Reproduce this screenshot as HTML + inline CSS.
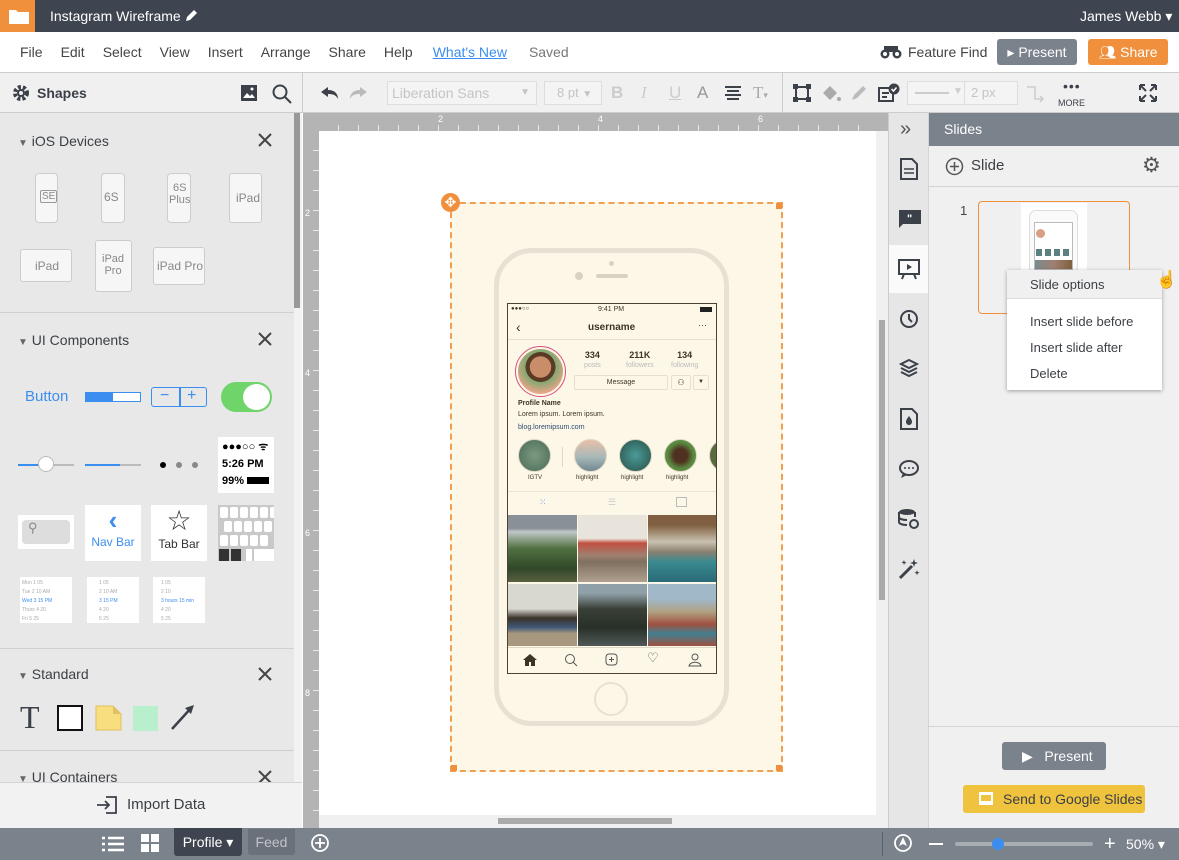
<!DOCTYPE html>
<html><head><meta charset="utf-8"><style>
*{box-sizing:border-box;margin:0;padding:0}
body{width:1179px;height:860px;overflow:hidden;position:relative;font-family:"Liberation Sans",sans-serif;background:#fff;color:#3b3f45}
.a{position:absolute}
.ic{fill:none;stroke:#3b4049;stroke-width:2}
.x{position:absolute;width:14px;height:14px}
</style></head><body>
<!-- top bar -->
<div class="a" style="left:0;top:0;width:1179px;height:32px;background:#3f4550"></div>
<div class="a" style="left:0;top:0;width:35px;height:32px;background:#f0903c"></div>
<svg class="a" style="left:9px;top:8px" width="20" height="16"><path d="M0 2h7l2 2h11v12H0z" fill="#fff"/></svg>
<div class="a" style="left:50px;top:8px;color:#fff;font-size:14px">Instagram Wireframe</div>
<svg class="a" style="left:184px;top:9px" width="14" height="14"><path d="M2 12l1-4 7-7 3 3-7 7z" fill="#fff"/></svg>
<div class="a" style="left:1080px;top:8px;color:#fff;font-size:14px">James Webb ▾</div>
<!-- menu -->
<div class="a" style="left:0;top:32px;width:1179px;height:41px;border-bottom:1px solid #ccc;background:#fff"></div>
<div class="a" style="left:20px;top:44px;font-size:14px;color:#444">
<span style="margin-right:18px">File</span><span style="margin-right:18px">Edit</span><span style="margin-right:18px">Select</span><span style="margin-right:18px">View</span><span style="margin-right:18px">Insert</span><span style="margin-right:18px">Arrange</span><span style="margin-right:18px">Share</span><span style="margin-right:20px">Help</span><span style="margin-right:22px;color:#3b8ef0;text-decoration:underline">What's New</span><span style="color:#777">Saved</span></div>
<svg class="a" style="left:880px;top:44px" width="22" height="16"><circle cx="5" cy="10" r="4.5" fill="#3b4049"/><circle cx="17" cy="10" r="4.5" fill="#3b4049"/><rect x="4" y="2" width="14" height="6" fill="#3b4049"/><circle cx="5" cy="10" r="2" fill="#fff"/><circle cx="17" cy="10" r="2" fill="#fff"/></svg>
<div class="a" style="left:908px;top:44px;font-size:14px;color:#444">Feature Find</div>
<div class="a" style="left:997px;top:39px;width:80px;height:26px;background:#7a828c;border-radius:3px;color:#fff;font-size:14px;line-height:26px;text-align:center">▸ Present</div>
<div class="a" style="left:1088px;top:39px;width:80px;height:26px;background:#f0903c;border-radius:3px;color:#fff;font-size:14px;line-height:26px;text-align:center">👥︎ Share</div>
<!-- toolbar -->
<div class="a" style="left:0;top:73px;width:1179px;height:40px;background:#f0f0f0;border-bottom:1px solid #ccc"></div>
<div class="a" style="left:302px;top:73px;width:1px;height:40px;background:#ccc"></div>
<svg class="a" style="left:12px;top:84px" width="18" height="18"><circle cx="9" cy="9" r="6" fill="none" stroke="#3b4049" stroke-width="4" stroke-dasharray="3 2"/><circle cx="9" cy="9" r="4" fill="#3b4049"/><circle cx="9" cy="9" r="2" fill="#f0f0f0"/></svg>
<div class="a" style="left:37px;top:85px;font-size:14px;font-weight:bold;color:#3b4049">Shapes</div>
<svg class="a" style="left:240px;top:84px" width="18" height="18"><rect x="1" y="1" width="16" height="16" fill="#3b4049"/><path d="M3 14l4-5 3 3 2-2 3 4z" fill="#fff"/><circle cx="12" cy="5" r="1.5" fill="#fff"/></svg>
<svg class="a" style="left:271px;top:83px" width="22" height="22"><circle cx="9" cy="9" r="6.5" class="ic"/><path d="M14 14l6 6" class="ic" stroke-width="2.5"/></svg>
<svg class="a" style="left:320px;top:86px" width="60" height="14"><path d="M8 1L1 6l7 5V8c5 0 8 1 10 5 0-5-3-9-10-9z" fill="#3b4049"/><path d="M40 1l7 5-7 5V8c-5 0-8 1-10 5 0-5 3-9 10-9z" fill="#bbb"/></svg>
<div class="a" style="left:387px;top:81px;width:150px;height:24px;border:1px solid #ddd;background:#f4f4f4;color:#c4c4c4;font-size:14px;line-height:22px;padding-left:4px">Liberation Sans<span style="float:right;margin-right:6px;font-size:10px">▼</span></div>
<div class="a" style="left:544px;top:81px;width:58px;height:24px;border:1px solid #ddd;background:#f4f4f4;color:#c4c4c4;font-size:13px;line-height:22px;padding-left:12px">8 pt <span style="font-size:10px">▼</span></div>
<div class="a" style="left:611px;top:83px;font-size:17px;color:#ccc;font-weight:bold">B</div>
<div class="a" style="left:641px;top:83px;font-size:17px;color:#ccc;font-style:italic;font-family:'Liberation Serif'">I</div>
<div class="a" style="left:669px;top:83px;font-size:17px;color:#ccc;text-decoration:underline">U</div>
<div class="a" style="left:697px;top:83px;font-size:17px;color:#999">A</div>
<svg class="a" style="left:725px;top:86px" width="16" height="14"><path d="M0 1h16M2 5h12M0 9h16M2 13h12" stroke="#3b4049" stroke-width="2"/></svg>
<div class="a" style="left:753px;top:83px;font-size:17px;color:#aaa;font-family:'Liberation Serif'">T<span style="font-size:9px">▾</span></div>
<div class="a" style="left:782px;top:73px;width:1px;height:40px;background:#ccc"></div>
<svg class="a" style="left:793px;top:84px" width="18" height="18"><rect x="3" y="3" width="12" height="12" fill="none" stroke="#3b4049" stroke-width="2"/><rect x="0" y="0" width="5" height="5" fill="#3b4049"/><rect x="13" y="0" width="5" height="5" fill="#3b4049"/><rect x="0" y="13" width="5" height="5" fill="#3b4049"/><rect x="13" y="13" width="5" height="5" fill="#3b4049"/></svg>
<svg class="a" style="left:821px;top:84px" width="20" height="18"><path d="M2 9l7-7 7 7-7 7z" fill="#aaa"/><circle cx="18" cy="15" r="2" fill="#aaa"/></svg>
<svg class="a" style="left:850px;top:84px" width="18" height="18"><path d="M2 16l2-5 9-9 3 3-9 9z" fill="#bbb"/></svg>
<svg class="a" style="left:878px;top:83px" width="22" height="20"><rect x="1" y="5" width="14" height="13" fill="none" stroke="#3b4049" stroke-width="2"/><path d="M4 10h7M4 14h5" stroke="#3b4049" stroke-width="2"/><circle cx="16" cy="6" r="5.5" fill="#3b4049"/><path d="M13.5 6l2 2 3-3.5" stroke="#fff" stroke-width="1.5" fill="none"/></svg>
<div class="a" style="left:907px;top:81px;width:58px;height:24px;border:1px solid #ddd;background:#f4f4f4"></div>
<div class="a" style="left:915px;top:92px;width:34px;height:1.5px;background:#ccc"></div>
<div class="a" style="left:953px;top:86px;font-size:10px;color:#ccc">▼</div>
<div class="a" style="left:964px;top:81px;width:54px;height:24px;border:1px solid #ddd;background:#f4f4f4;color:#c4c4c4;font-size:13px;line-height:22px;padding-left:6px">2 px</div>
<svg class="a" style="left:1025px;top:84px" width="22" height="20"><path d="M2 3h8v12h8M15 12l3 3-3 3" fill="none" stroke="#ccc" stroke-width="1.5"/></svg>
<div class="a" style="left:1063px;top:78px;font-size:14px;color:#3b4049;letter-spacing:1px">•••</div>
<div class="a" style="left:1058px;top:98px;font-size:9px;color:#3b4049">MORE</div>
<svg class="a" style="left:1139px;top:84px" width="18" height="18"><path d="M1 1l6 6M1 1h5M1 1v5M17 1l-6 6M17 1h-5M17 1v5M1 17l6-6M1 17h5M1 17v-5M17 17l-6-6M17 17h-5M17 17v-5" stroke="#3b4049" stroke-width="2"/></svg>
<!-- left panel -->
<div class="a" style="left:0;top:113px;width:302px;height:715px;background:#e8e8e8"></div>
<div class="a" style="left:294px;top:113px;width:8px;height:715px;background:#f2f2f2"></div>
<div class="a" style="left:294px;top:113px;width:6px;height:195px;background:#999"></div>
<div class="a" style="left:18px;top:133px;font-size:14px;color:#3b3f45"><span style="font-size:10px;color:#666">▼</span> iOS Devices</div>
<svg class="x" style="left:258px;top:133px"><path d="M1 1l12 12M13 1L1 13" stroke="#444" stroke-width="2"/></svg>
<!-- devices -->
<div class="a" style="left:35px;top:173px;width:23px;height:50px;border:1px solid #ccc;border-radius:4px;background:#f6f6f6"></div><div class="a" style="left:40px;top:190px;font-size:10px;color:#888;border:1px solid #999;border-radius:2px;padding:0 1px">SE</div>
<div class="a" style="left:101px;top:173px;width:24px;height:50px;border:1px solid #ccc;border-radius:4px;background:#f6f6f6"></div><div class="a" style="left:104px;top:190px;font-size:12px;color:#888">6S</div>
<div class="a" style="left:167px;top:173px;width:24px;height:50px;border:1px solid #ccc;border-radius:4px;background:#f6f6f6"></div><div class="a" style="left:169px;top:182px;font-size:11px;color:#888;line-height:12px;text-align:center">6S<br>Plus</div>
<div class="a" style="left:229px;top:173px;width:33px;height:50px;border:1px solid #ccc;border-radius:3px;background:#f6f6f6"></div><div class="a" style="left:236px;top:191px;font-size:12px;color:#888">iPad</div>
<div class="a" style="left:20px;top:249px;width:52px;height:33px;border:1px solid #ccc;border-radius:3px;background:#f6f6f6"></div><div class="a" style="left:35px;top:259px;font-size:12px;color:#888">iPad</div>
<div class="a" style="left:95px;top:240px;width:37px;height:52px;border:1px solid #ccc;border-radius:3px;background:#f6f6f6"></div><div class="a" style="left:102px;top:253px;font-size:11px;color:#888;line-height:12px;text-align:center">iPad<br>Pro</div>
<div class="a" style="left:153px;top:247px;width:52px;height:38px;border:1px solid #ccc;border-radius:3px;background:#f6f6f6"></div><div class="a" style="left:157px;top:259px;font-size:12px;color:#888">iPad Pro</div>
<div class="a" style="left:0;top:312px;width:294px;height:1px;background:#d0d0d0"></div>
<div class="a" style="left:18px;top:332px;font-size:14px;color:#3b3f45"><span style="font-size:10px;color:#666">▼</span> UI Components</div>
<svg class="x" style="left:258px;top:332px"><path d="M1 1l12 12M13 1L1 13" stroke="#444" stroke-width="2"/></svg>
<div class="a" style="left:25px;top:388px;font-size:15px;color:#3b8ef0">Button</div>
<div class="a" style="left:85px;top:392px;width:56px;height:10px;border:1px solid #3b8ef0;background:#fff"><div style="width:27px;height:8px;background:#3b8ef0"></div></div>
<div class="a" style="left:151px;top:387px;width:56px;height:20px;border:1.5px solid #3b8ef0;border-radius:3px;color:#3b8ef0;font-size:16px;line-height:16px"><span class="a" style="left:8px;top:0">−</span><span class="a" style="left:27px;top:0;width:1.5px;height:18px;background:#3b8ef0"></span><span class="a" style="left:35px;top:0">+</span></div>
<div class="a" style="left:221px;top:382px;width:51px;height:30px;border-radius:15px;background:#6fd46a"></div><div class="a" style="left:243px;top:384px;width:27px;height:26px;border-radius:50%;background:#fff"></div>
<div class="a" style="left:18px;top:464px;width:56px;height:1.5px;background:#bbb"></div><div class="a" style="left:18px;top:464px;width:28px;height:1.5px;background:#3b8ef0"></div><div class="a" style="left:38px;top:456px;width:16px;height:16px;border-radius:50%;background:#fff;border:1px solid #bbb"></div>
<div class="a" style="left:85px;top:464px;width:56px;height:1.5px;background:#bbb"></div><div class="a" style="left:85px;top:464px;width:35px;height:1.5px;background:#3b8ef0"></div>
<div class="a" style="left:160px;top:462px;width:6px;height:6px;border-radius:50%;background:#000"></div><div class="a" style="left:176px;top:462px;width:6px;height:6px;border-radius:50%;background:#888"></div><div class="a" style="left:192px;top:462px;width:6px;height:6px;border-radius:50%;background:#888"></div>
<div class="a" style="left:218px;top:437px;width:56px;height:56px;background:#fff;font-size:11px;color:#000;font-weight:bold;padding:2px 4px;line-height:17px">●●●○○ ᯤ<br>5:26 PM<br>99% <span style="display:inline-block;width:22px;height:7px;background:#000"></span></div>
<div class="a" style="left:18px;top:515px;width:56px;height:34px;background:#fff"><div style="margin:5px 4px;height:24px;background:#ddd;border-radius:4px;color:#888;font-size:13px;padding-left:6px">⚲</div></div>
<div class="a" style="left:85px;top:505px;width:56px;height:56px;background:#fff;color:#3b8ef0;text-align:center;font-size:12px"><div style="font-size:26px;line-height:30px;font-weight:bold">‹</div>Nav Bar</div>
<div class="a" style="left:151px;top:505px;width:56px;height:56px;background:#fff;color:#333;text-align:center;font-size:12px"><div style="font-size:28px;line-height:32px">☆</div>Tab Bar</div>
<svg class="a" style="left:218px;top:505px" width="56" height="56"><rect width="56" height="56" fill="#c9c9c9"/><g fill="#fff"><rect x="2" y="2" width="8" height="11" rx="2"/><rect x="12" y="2" width="8" height="11" rx="2"/><rect x="22" y="2" width="8" height="11" rx="2"/><rect x="32" y="2" width="8" height="11" rx="2"/><rect x="42" y="2" width="8" height="11" rx="2"/><rect x="52" y="2" width="8" height="11" rx="2"/><rect x="6" y="16" width="8" height="11" rx="2"/><rect x="16" y="16" width="8" height="11" rx="2"/><rect x="26" y="16" width="8" height="11" rx="2"/><rect x="36" y="16" width="8" height="11" rx="2"/><rect x="46" y="16" width="8" height="11" rx="2"/><rect x="2" y="30" width="8" height="11" rx="2"/><rect x="12" y="30" width="8" height="11" rx="2"/><rect x="22" y="30" width="8" height="11" rx="2"/><rect x="32" y="30" width="8" height="11" rx="2"/><rect x="42" y="30" width="8" height="11" rx="2"/><rect x="28" y="44" width="6" height="12"/><rect x="36" y="44" width="20" height="12"/></g><rect x="1" y="44" width="10" height="12" fill="#333"/><rect x="13" y="44" width="10" height="12" fill="#333"/></svg>
<div class="a" style="left:20px;top:577px;width:52px;height:46px;background:#fff;font-size:5px;color:#aaa;line-height:9px;padding:2px">Mon 1 05<br>Tue 2 10 AM<br><span style="color:#3b8ef0">Wed 3 15 PM</span><br>Thurs 4 20<br>Fri 5 25</div>
<div class="a" style="left:87px;top:577px;width:52px;height:46px;background:#fff;font-size:5px;color:#aaa;line-height:9px;padding:2px 12px">1 05<br>2 10 AM<br><span style="color:#3b8ef0">3 15 PM</span><br>4 20<br>5 25</div>
<div class="a" style="left:153px;top:577px;width:52px;height:46px;background:#fff;font-size:5px;color:#aaa;line-height:9px;padding:2px 8px">1 05<br>2 10<br><span style="color:#3b8ef0">3 hours 15 min</span><br>4 20<br>5 25</div>
<div class="a" style="left:0;top:648px;width:294px;height:1px;background:#d0d0d0"></div>
<div class="a" style="left:18px;top:666px;font-size:14px;color:#3b3f45"><span style="font-size:10px;color:#666">▼</span> Standard</div>
<svg class="x" style="left:258px;top:667px"><path d="M1 1l12 12M13 1L1 13" stroke="#444" stroke-width="2"/></svg>
<div class="a" style="left:20px;top:700px;font-size:32px;font-family:'Liberation Serif';color:#3b4049;line-height:34px">T</div>
<div class="a" style="left:57px;top:705px;width:26px;height:26px;border:2px solid #111;background:#fff"></div>
<svg class="a" style="left:95px;top:705px" width="28" height="26"><path d="M1 1h17l8 8v16H1z" fill="#f8de7e" stroke="#e0c060"/><path d="M18 1v8h8" fill="#e0c060"/></svg>
<div class="a" style="left:133px;top:706px;width:25px;height:25px;background:#b8efcc"></div>
<svg class="a" style="left:170px;top:703px" width="26" height="28"><path d="M2 26L22 4" stroke="#3b4049" stroke-width="2.5"/><path d="M24 2l-9 3 6 6z" fill="#3b4049"/></svg>
<div class="a" style="left:0;top:750px;width:294px;height:1px;background:#d0d0d0"></div>
<div class="a" style="left:18px;top:769px;font-size:14px;color:#3b3f45"><span style="font-size:10px;color:#666">▼</span> UI Containers</div>
<svg class="x" style="left:258px;top:770px"><path d="M1 1l12 12M13 1L1 13" stroke="#444" stroke-width="2"/></svg>
<div class="a" style="left:0;top:782px;width:302px;height:46px;background:#f2f2f2;border-top:1px solid #d4d4d4"></div>
<svg class="a" style="left:96px;top:795px" width="22" height="20"><path d="M1 10h12M9 6l4 4-4 4M10 2h10v16H10" fill="none" stroke="#3b4049" stroke-width="1.8"/></svg>
<div class="a" style="left:127px;top:796px;font-size:15px;color:#3b3f45">Import Data</div>
<!-- canvas -->
<div class="a" style="left:303px;top:113px;width:585px;height:715px;background:#b4b4b4"></div>
<div class="a" style="left:319px;top:131px;width:557px;height:684px;background:#fff"></div>
<div class="a" style="left:876px;top:131px;width:12px;height:697px;background:#f0f0f0"></div>
<div class="a" style="left:879px;top:320px;width:6px;height:280px;background:#aaa"></div>
<div class="a" style="left:319px;top:815px;width:557px;height:13px;background:#f0f0f0"></div>
<div class="a" style="left:498px;top:818px;width:174px;height:6px;background:#aaa"></div>
<div class="a" style="left:319px;top:125px;width:557px;height:6px;background:repeating-linear-gradient(90deg,transparent 0 19px,#e8e8e8 19px 20px)"></div>
<div class="a" style="left:313px;top:131px;width:6px;height:684px;background:repeating-linear-gradient(180deg,transparent 0 19px,#e8e8e8 19px 20px)"></div>
<div class="a" style="left:438px;top:114px;font-size:9px;color:#fff">2</div>
<div class="a" style="left:598px;top:114px;font-size:9px;color:#fff">4</div>
<div class="a" style="left:758px;top:114px;font-size:9px;color:#fff">6</div>
<div class="a" style="left:305px;top:208px;font-size:9px;color:#fff">2</div>
<div class="a" style="left:305px;top:368px;font-size:9px;color:#fff">4</div>
<div class="a" style="left:305px;top:528px;font-size:9px;color:#fff">6</div>
<div class="a" style="left:305px;top:688px;font-size:9px;color:#fff">8</div>
<!-- page/frame -->
<div class="a" style="left:450px;top:202px;width:333px;height:570px;background:#fdf7e8;border:2px dashed #f0a050"></div>
<div class="a" style="left:441px;top:193px;width:19px;height:19px;border-radius:50%;background:#f0903c;color:#fff;font-size:14px;line-height:19px;text-align:center">✥</div>
<div class="a" style="left:776px;top:203px;width:6px;height:6px;background:#f0903c"></div>
<div class="a" style="left:451px;top:765px;width:6px;height:6px;background:#f0903c"></div>
<div class="a" style="left:776px;top:765px;width:6px;height:6px;background:#f0903c"></div>
<div class="a" style="left:494px;top:248px;width:235px;height:478px;border:5px solid #e6e1d3;border-radius:38px"></div>
<div class="a" style="left:609px;top:261px;width:5px;height:5px;border-radius:50%;background:#d8d2c3"></div>
<div class="a" style="left:575px;top:272px;width:8px;height:8px;border-radius:50%;background:#d8d2c3"></div>
<div class="a" style="left:596px;top:274px;width:32px;height:4px;border-radius:2px;background:#d8d2c3"></div>
<div class="a" style="left:594px;top:682px;width:34px;height:34px;border-radius:50%;border:2px solid #e6e1d3"></div>
<!-- screen -->
<div class="a" style="left:507px;top:303px;width:210px;height:371px;border:1.5px solid #4a4235;background:#fdf7e8;overflow:hidden;font-size:8px;color:#3b3528">
 <div class="a" style="left:3px;top:2px;font-size:6px">●●●○○</div>
 <div class="a" style="left:90px;top:2px;font-size:7px">9:41 PM</div>
 <div class="a" style="left:192px;top:3px;width:12px;height:5px;background:#222"></div>
 <div class="a" style="left:8px;top:15px;font-size:14px">‹</div>
 <div class="a" style="left:80px;top:18px;font-size:10px;font-weight:bold">username</div>
 <div class="a" style="left:190px;top:16px;font-size:9px">···</div>
 <div class="a" style="left:0;top:35px;width:210px;height:1px;background:#e6dfcc"></div>
 <div class="a" style="left:7px;top:42px;width:51px;height:51px;border-radius:50%;border:1.5px solid #d8507a;padding:2px"><div style="width:100%;height:100%;border-radius:50%;background:radial-gradient(circle at 50% 40%,#c98d6a 0 30%,#5a3a25 31% 42%,#80a870 43%,#e9a58a 75%)"></div></div>
 <div class="a" style="left:76px;top:47px;font-size:9px;font-weight:bold;text-align:center;line-height:9px">334<br><span style="font-size:7px;color:#bbb;font-weight:normal">posts</span></div>
 <div class="a" style="left:118px;top:47px;font-size:9px;font-weight:bold;text-align:center;line-height:9px">211K<br><span style="font-size:7px;color:#bbb;font-weight:normal">followers</span></div>
 <div class="a" style="left:163px;top:47px;font-size:9px;font-weight:bold;text-align:center;line-height:9px">134<br><span style="font-size:7px;color:#bbb;font-weight:normal">following</span></div>
 <div class="a" style="left:66px;top:71px;width:94px;height:15px;border:1px solid #e6dfcc;border-radius:2px;font-size:7px;text-align:center;line-height:13px">Message</div>
 <div class="a" style="left:163px;top:71px;width:20px;height:15px;border:1px solid #e6dfcc;border-radius:2px;font-size:8px;text-align:center;line-height:13px">⚇</div>
 <div class="a" style="left:185px;top:71px;width:16px;height:15px;border:1px solid #e6dfcc;border-radius:2px;font-size:6px;text-align:center;line-height:13px">▼</div>
 <div class="a" style="left:10px;top:96px;font-size:7px;font-weight:bold">Profile Name</div>
 <div class="a" style="left:10px;top:107px;font-size:7px">Lorem ipsum. Lorem ipsum.</div>
 <div class="a" style="left:10px;top:120px;font-size:7px;color:#2d4b70">blog.loremipsum.com</div>
 <div class="a" style="left:10px;top:135px;width:33px;height:33px;border-radius:50%;border:1px solid #e0d8c4;background:radial-gradient(#7a9a80,#4a6a58)"></div>
 <div class="a" style="left:20px;top:171px;font-size:6px">IGTV</div>
 <div class="a" style="left:54px;top:143px;width:1px;height:20px;background:#e0d8c4"></div>
 <div class="a" style="left:66px;top:135px;width:33px;height:33px;border-radius:50%;border:1px solid #e0d8c4;background:linear-gradient(#e8c0a8,#a8b8b8 55%,#708890)"></div>
 <div class="a" style="left:68px;top:171px;font-size:6px">highlight</div>
 <div class="a" style="left:111px;top:135px;width:33px;height:33px;border-radius:50%;border:1px solid #e0d8c4;background:radial-gradient(#4a9a98,#2a5048)"></div>
 <div class="a" style="left:113px;top:171px;font-size:6px">highlight</div>
 <div class="a" style="left:156px;top:135px;width:33px;height:33px;border-radius:50%;border:1px solid #e0d8c4;background:radial-gradient(#503020 0 30%,#5a8a40 60%)"></div>
 <div class="a" style="left:158px;top:171px;font-size:6px">highlight</div>
 <div class="a" style="left:201px;top:135px;width:33px;height:33px;border-radius:50%;border:1px solid #e0d8c4;background:#5a6a40"></div>
 <div class="a" style="left:0;top:187px;width:210px;height:1px;background:#ece5d2"></div>
 <div class="a" style="left:31px;top:193px;font-size:9px;color:#6aa0e0">⁙</div>
 <div class="a" style="left:100px;top:193px;font-size:9px;color:#ccc">☰</div>
 <div class="a" style="left:168px;top:193px;width:11px;height:10px;border:1px solid #bbb"></div>
 <div class="a" style="left:0;top:211px;width:69px;height:67px;background:linear-gradient(#8a9098 0 20%,#c0c8c8 25%,#507040 50%,#304828 80%,#5a6040)"></div>
 <div class="a" style="left:70px;top:211px;width:69px;height:67px;background:linear-gradient(#e8e4dc 0 35%,#c05040 42%,#a08070 60%,#807060 70%,#b0a090)"></div>
 <div class="a" style="left:140px;top:211px;width:70px;height:67px;background:linear-gradient(#806040 0 15%,#c8c0b0 40%,#8a8070 55%,#3a8a90 70%,#2a6a78)"></div>
 <div class="a" style="left:0;top:280px;width:69px;height:62px;background:linear-gradient(#d8d8d0 0 40%,#3a3228 55%,#405878 70%,#a89880 80%)"></div>
 <div class="a" style="left:70px;top:280px;width:69px;height:62px;background:linear-gradient(#90a0a8 0 15%,#3a4038 40%,#283028 70%,#505858)"></div>
 <div class="a" style="left:140px;top:280px;width:70px;height:62px;background:linear-gradient(#a0b8c8 0 25%,#b0a080 45%,#a05040 65%,#408090 80%,#a05040)"></div>
 <div class="a" style="left:0;top:343px;width:210px;height:1px;background:#e0d8c4"></div>
 <svg class="a" style="left:15px;top:350px" width="14" height="12"><path d="M7 0L0 6h2v6h4V8h2v4h4V6h2z" fill="#3b3528"/></svg>
 <svg class="a" style="left:56px;top:349px" width="14" height="14"><circle cx="6" cy="6" r="4.5" fill="none" stroke="#555" stroke-width="1"/><path d="M9 9l4 4" stroke="#555"/></svg>
 <svg class="a" style="left:97px;top:349px" width="14" height="14"><rect x="1" y="1" width="11" height="11" rx="3" fill="none" stroke="#555"/><path d="M6.5 4v5M4 6.5h5" stroke="#555"/></svg>
 <div class="a" style="left:139px;top:346px;font-size:13px;color:#555">♡</div>
 <svg class="a" style="left:180px;top:349px" width="14" height="14"><circle cx="7" cy="4" r="3" fill="none" stroke="#555"/><path d="M1 13c1-5 11-5 12 0z" fill="none" stroke="#555"/></svg>
</div>
<!-- right strip -->
<div class="a" style="left:888px;top:113px;width:41px;height:715px;background:#e6e6e6;border-left:1px solid #ccc;border-right:1px solid #d4d4d4"></div>
<div class="a" style="left:889px;top:245px;width:39px;height:48px;background:#fafafa"></div>
<div class="a" style="left:900px;top:118px;font-size:20px;color:#555">»</div>
<svg class="a" style="left:900px;top:158px" width="18" height="22"><path d="M1 1h11l5 5v15H1z" fill="none" stroke="#3b4049" stroke-width="2"/><path d="M4 11h10M4 15h10" stroke="#3b4049" stroke-width="1.5"/></svg>
<svg class="a" style="left:899px;top:210px" width="22" height="18"><path d="M0 0h22v14H4L0 18z" fill="#3b4049"/><text x="8" y="12" font-size="11" fill="#fff" font-family="Liberation Sans" font-weight="bold">"</text></svg>
<svg class="a" style="left:898px;top:258px" width="22" height="22"><rect x="1" y="2" width="20" height="14" fill="none" stroke="#3b4049" stroke-width="2"/><path d="M9 6v6l5-3z" fill="#3b4049"/><path d="M6 16l-2 5M16 16l2 5M0 2h22" stroke="#3b4049" stroke-width="2"/></svg>
<svg class="a" style="left:899px;top:309px" width="20" height="20"><circle cx="10" cy="10" r="8" fill="none" stroke="#3b4049" stroke-width="2"/><path d="M10 5v5l3 3" fill="none" stroke="#3b4049" stroke-width="2"/></svg>
<svg class="a" style="left:899px;top:358px" width="20" height="20"><path d="M10 2l8 4-8 4-8-4z" fill="none" stroke="#3b4049" stroke-width="2"/><path d="M2 10l8 4 8-4M2 14l8 4 8-4" fill="none" stroke="#3b4049" stroke-width="2"/></svg>
<svg class="a" style="left:900px;top:408px" width="18" height="22"><path d="M1 1h11l5 5v15H1z" fill="none" stroke="#3b4049" stroke-width="2"/><path d="M9 8c-3 4-3 5-3 6a3 3 0 006 0c0-1 0-2-3-6z" fill="#3b4049"/></svg>
<svg class="a" style="left:898px;top:459px" width="22" height="20"><ellipse cx="11" cy="9" rx="9" ry="7" fill="none" stroke="#3b4049" stroke-width="2"/><path d="M5 14l-2 5 6-3" fill="#3b4049"/><circle cx="7" cy="9" r="1" fill="#3b4049"/><circle cx="11" cy="9" r="1" fill="#3b4049"/><circle cx="15" cy="9" r="1" fill="#3b4049"/></svg>
<svg class="a" style="left:898px;top:508px" width="22" height="22"><ellipse cx="9" cy="4" rx="8" ry="3" fill="#3b4049"/><path d="M1 4v10c0 2 4 3 8 3M17 4v5M1 9c0 2 4 3 8 3" fill="none" stroke="#3b4049" stroke-width="2"/><circle cx="16" cy="16" r="4" fill="none" stroke="#3b4049" stroke-width="2"/></svg>
<svg class="a" style="left:898px;top:558px" width="22" height="22"><path d="M2 20L14 8" stroke="#3b4049" stroke-width="3"/><path d="M16 1l1 3 3 1-3 1-1 3-1-3-3-1 3-1zM6 2l.7 2 2 .7-2 .7L6 7l-.7-2-2-.7 2-.7zM19 12l.7 2 2 .7-2 .7-.7 2-.7-2-2-.7 2-.7z" fill="#3b4049"/></svg>
<!-- slides panel -->
<div class="a" style="left:929px;top:113px;width:250px;height:715px;background:#f0f0f0"></div>
<div class="a" style="left:929px;top:113px;width:250px;height:33px;background:#7a828c;color:#fff;font-size:14px;line-height:33px;padding-left:15px">Slides</div>
<div class="a" style="left:929px;top:186px;width:250px;height:1px;background:#d4d4d4"></div>
<svg class="a" style="left:945px;top:157px" width="19" height="19"><circle cx="9.5" cy="9.5" r="8" fill="none" stroke="#555" stroke-width="1.5"/><path d="M9.5 5v9M5 9.5h9" stroke="#555" stroke-width="1.5"/></svg>
<div class="a" style="left:971px;top:157px;font-size:15px;color:#3b3f45">Slide</div>
<div class="a" style="left:1142px;top:153px;font-size:21px;color:#555">⚙</div>
<div class="a" style="left:960px;top:203px;font-size:13px;color:#444">1</div>
<div class="a" style="left:978px;top:201px;width:152px;height:113px;border:1.5px solid #f0903c;border-radius:4px;background:#f0f0f0"></div>
<div class="a" style="left:1021px;top:203px;width:66px;height:110px;background:#fff"></div>
<div class="a" style="left:1029px;top:210px;width:49px;height:64px;border:1px solid #ddd;border-radius:7px;background:#fafafa"></div>
<div class="a" style="left:1034px;top:222px;width:39px;height:48px;border:1px solid #bbb;background:#fff"></div>
<div class="a" style="left:1036px;top:229px;width:9px;height:9px;border-radius:50%;background:#d8a080"></div>
<div class="a" style="left:1036px;top:249px;width:35px;height:7px;background:repeating-linear-gradient(90deg,#5a8080 0 6px,#fff 6px 9px)"></div>
<div class="a" style="left:1035px;top:260px;width:37px;height:9px;background:linear-gradient(90deg,#7a8a90,#a08070,#806040)"></div>
<div class="a" style="left:1007px;top:270px;width:155px;height:120px;background:#fff;box-shadow:0 1px 4px rgba(0,0,0,.35)"></div>
<div class="a" style="left:1007px;top:270px;width:155px;height:29px;background:#f0f0f0;border-bottom:1px solid #ddd;font-size:13px;line-height:29px;padding-left:23px;color:#3b3f45">Slide options</div>
<div class="a" style="left:1030px;top:309px;font-size:13px;color:#3b3f45;line-height:26px">Insert slide before<br>Insert slide after<br>Delete</div>
<div class="a" style="left:1156px;top:270px;font-size:17px">☝</div>
<div class="a" style="left:929px;top:726px;width:250px;height:1px;background:#d4d4d4"></div>
<div class="a" style="left:1002px;top:742px;width:104px;height:28px;background:#7a828c;border-radius:3px;color:#fff;font-size:14px;line-height:28px;padding-left:20px">▶&nbsp;&nbsp;&nbsp;Present</div>
<div class="a" style="left:963px;top:785px;width:182px;height:28px;background:#f0c33f;border-radius:3px;color:#3b3f45;font-size:14px;line-height:28px;padding-left:40px">Send to Google Slides</div>
<div class="a" style="left:979px;top:792px;width:14px;height:13px;background:#fff;border-bottom:3px solid #fff"><div style="margin:3px 2px;height:6px;background:#f0c33f"></div></div>
<!-- bottom bar -->
<div class="a" style="left:0;top:828px;width:1179px;height:32px;background:#7a828c"></div>
<svg class="a" style="left:102px;top:835px" width="22" height="18"><path d="M6 3h16M6 9h16M6 15h16" stroke="#fff" stroke-width="2.5"/><path d="M0 3h3M0 9h3M0 15h3" stroke="#fff" stroke-width="2.5"/></svg>
<svg class="a" style="left:141px;top:834px" width="18" height="18"><rect x="0" y="0" width="8" height="8" fill="#fff"/><rect x="10" y="0" width="8" height="8" fill="#fff"/><rect x="0" y="10" width="8" height="8" fill="#fff"/><rect x="10" y="10" width="8" height="8" fill="#fff"/></svg>
<div class="a" style="left:174px;top:828px;width:68px;height:28px;background:#3f4550;border-radius:0 0 3px 3px;color:#fff;font-size:14px;line-height:28px;text-align:center">Profile ▾</div>
<div class="a" style="left:248px;top:829px;width:47px;height:26px;background:#6a717b;border-radius:0 0 3px 3px;color:#c0c4c8;font-size:14px;line-height:26px;text-align:center">Feed</div>
<svg class="a" style="left:310px;top:833px" width="20" height="20"><circle cx="10" cy="10" r="8" fill="none" stroke="#fff" stroke-width="1.8"/><path d="M10 5v10M5 10h10" stroke="#fff" stroke-width="1.8"/></svg>
<div class="a" style="left:882px;top:832px;width:1px;height:24px;background:#5a616a"></div>
<svg class="a" style="left:893px;top:833px" width="20" height="20"><circle cx="10" cy="10" r="8" fill="none" stroke="#fff" stroke-width="1.8"/><path d="M10 4l4 9-4-2-4 2z" fill="#fff"/></svg>
<div class="a" style="left:929px;top:843px;width:14px;height:2px;background:#fff"></div>
<div class="a" style="left:955px;top:842px;width:138px;height:4px;border-radius:2px;background:#a8adb3"></div>
<div class="a" style="left:992px;top:838px;width:12px;height:12px;border-radius:50%;background:#3b8ef0"></div>
<div class="a" style="left:1104px;top:836px;font-size:20px;color:#fff;line-height:16px">+</div>
<div class="a" style="left:1126px;top:836px;font-size:14px;color:#fff">50% ▾</div>
</body></html>
